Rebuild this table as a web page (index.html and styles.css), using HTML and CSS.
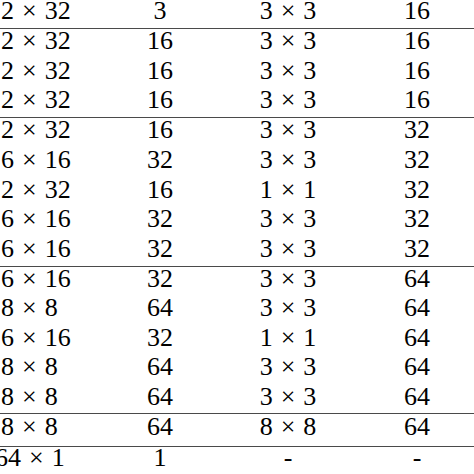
FILE: index.html
```html
<!DOCTYPE html>
<html>
<head>
<meta charset="utf-8">
<link rel="stylesheet" href="styles.css">
</head>
<body>
<div class="table">
  <div class="row r0"><span class="c1">2<span class="x">×</span>32</span><span class="c">3</span><span class="c">3<span class="x">×</span>3</span><span class="c">16</span></div>

  <div class="row g1 rule"><span class="c1">2<span class="x">×</span>32</span><span class="c">16</span><span class="c">3<span class="x">×</span>3</span><span class="c">16</span></div>
  <div class="row g1"><span class="c1">2<span class="x">×</span>32</span><span class="c">16</span><span class="c">3<span class="x">×</span>3</span><span class="c">16</span></div>
  <div class="row g1"><span class="c1">2<span class="x">×</span>32</span><span class="c">16</span><span class="c">3<span class="x">×</span>3</span><span class="c">16</span></div>

  <div class="row g2 rule"><span class="c1">2<span class="x">×</span>32</span><span class="c">16</span><span class="c">3<span class="x">×</span>3</span><span class="c">32</span></div>
  <div class="row g2"><span class="c1">6<span class="x">×</span>16</span><span class="c">32</span><span class="c">3<span class="x">×</span>3</span><span class="c">32</span></div>
  <div class="row g2"><span class="c1">2<span class="x">×</span>32</span><span class="c">16</span><span class="c">1<span class="x">×</span>1</span><span class="c">32</span></div>
  <div class="row g2"><span class="c1">6<span class="x">×</span>16</span><span class="c">32</span><span class="c">3<span class="x">×</span>3</span><span class="c">32</span></div>
  <div class="row g2"><span class="c1">6<span class="x">×</span>16</span><span class="c">32</span><span class="c">3<span class="x">×</span>3</span><span class="c">32</span></div>

  <div class="row g3 rule"><span class="c1">6<span class="x">×</span>16</span><span class="c">32</span><span class="c">3<span class="x">×</span>3</span><span class="c">64</span></div>
  <div class="row g3"><span class="c1">8<span class="x">×</span>8</span><span class="c">64</span><span class="c">3<span class="x">×</span>3</span><span class="c">64</span></div>
  <div class="row g3"><span class="c1">6<span class="x">×</span>16</span><span class="c">32</span><span class="c">1<span class="x">×</span>1</span><span class="c">64</span></div>
  <div class="row g3"><span class="c1">8<span class="x">×</span>8</span><span class="c">64</span><span class="c">3<span class="x">×</span>3</span><span class="c">64</span></div>
  <div class="row g3"><span class="c1">8<span class="x">×</span>8</span><span class="c">64</span><span class="c">3<span class="x">×</span>3</span><span class="c">64</span></div>

  <div class="row r14 rule"><span class="c1">8<span class="x">×</span>8</span><span class="c">64</span><span class="c">8<span class="x">×</span>8</span><span class="c">64</span></div>

  <div class="row r15 rule"><span class="c1 shift">64<span class="x">×</span>1</span><span class="c">1</span><span class="c">-</span><span class="c">-</span></div>
</div>
</body>
</html>
```

FILE: styles.css
```css
html, body {
  margin: 0;
  padding: 0;
  background: #ffffff;
  overflow: hidden;
}

.table {
  width: 474px;
  display: flex;
  flex-direction: column;
  font-family: "Liberation Serif", "Times New Roman", serif;
  font-size: 26px;
  color: #000000;
}

.row {
  box-sizing: border-box;
  display: grid;
  grid-template-columns: 104px 112px 144px 114px;
  line-height: 26px;
  white-space: nowrap;
  flex: none;
}

.rule {
  border-top: 1.4px solid #4a4a4a;
  line-height: 23.2px;
}

.r0 { height: 27.8px; line-height: 22px; }
.g1 { height: 29.8px; }
.g2 { height: 29.74px; }
.g3 { height: 29.52px; }
.r14 { height: 32.4px; line-height: 26.6px; }
.r15 { height: 28px; line-height: 21.8px; }

.c1 {
  text-align: left;
  padding-left: 1px;
}

.c1.shift {
  margin-left: -6px;
}

.c {
  text-align: center;
}

.x {
  margin: 0 8px;
}
```
